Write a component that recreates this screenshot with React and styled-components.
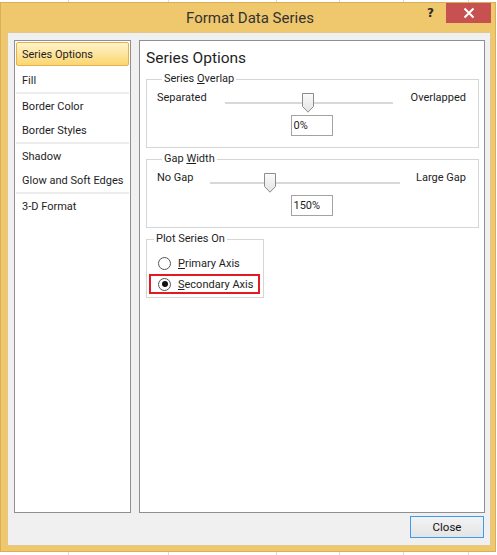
import styled, { createGlobalStyle } from 'styled-components'

const GlobalStyle = createGlobalStyle`
  html, body {
    margin: 0;
    padding: 0;
  }
  body {
    background-color: #ffffff;
    background-image:
      linear-gradient(#dadada, #dadada),
      linear-gradient(#dadada, #dadada),
      linear-gradient(#dadada, #dadada),
      linear-gradient(#dadada, #dadada),
      linear-gradient(#dadada, #dadada),
      linear-gradient(#dadada, #dadada);
    background-size: 1px 100%;
    background-repeat: no-repeat;
    background-position: 68px 0, 168px 0, 276px 0, 339px 0, 403px 0, 468px 0;
    height: 555px;
    font-family: Roboto, "Liberation Sans", sans-serif;
    font-size: 11px;
    color: #1e1e1e;
    white-space: nowrap;
  }
`

const menuItems = [
  [{ label: 'Series Options', selected: true }, { label: 'Fill' }],
  [{ label: 'Border Color' }, { label: 'Border Styles' }],
  [{ label: 'Shadow' }, { label: 'Glow and Soft Edges' }],
  [{ label: '3-D Format' }],
]

const Slider = ({ width, pos }) => (
  <Track $width={width}>
    <Thumb style={{ left: pos }} width='12' height='20' viewBox='0 0 12 20'>
      <defs>
        <linearGradient id='thumbFill' x1='0' y1='0' x2='0' y2='1'>
          <stop offset='0' stopColor='#fbfbfb' />
          <stop offset='1' stopColor='#e3e3e3' />
        </linearGradient>
      </defs>
      <path
        d='M0.5 0.5 H11.5 V13.5 L6 19.2 L0.5 13.5 Z'
        fill='url(#thumbFill)'
        stroke='#8c8c8c'
      />
    </Thumb>
  </Track>
)

const App = () => {
  return (
    <Page>
      <GlobalStyle />
      <Window>
        <TitleBar>
          <Title>Format Data Series</Title>
          <Help>?</Help>
          <CloseX>
            <svg width='12' height='12' viewBox='0 0 12 12'>
              <path d='M1.5 1.5 L10.5 10.5 M10.5 1.5 L1.5 10.5' stroke='#fff' strokeWidth='2' />
            </svg>
          </CloseX>
        </TitleBar>
        <Client>
          <Panels>
            <Menu>
              {menuItems.map((group, gi) => (
                <div key={gi}>
                  {gi > 0 && <Separator />}
                  {group.map((item) => (
                    <MenuItem key={item.label} $selected={item.selected}>
                      {item.label}
                    </MenuItem>
                  ))}
                </div>
              ))}
            </Menu>
            <Content>
              <Heading>Series Options</Heading>
              <Group>
                <Legend>
                  Series <u>O</u>verlap
                </Legend>
                <SliderRow>
                  <Label>Separated</Label>
                  <Slider width={168} pos={77} />
                  <Label>Overlapped</Label>
                </SliderRow>
                <ValueBox>0%</ValueBox>
              </Group>
              <Group>
                <Legend>
                  Gap <u>W</u>idth
                </Legend>
                <SliderRow>
                  <Label>No Gap</Label>
                  <Slider width={190} pos={54} />
                  <Label>Large Gap</Label>
                </SliderRow>
                <ValueBox>150%</ValueBox>
              </Group>
              <RadioGroup>
                <Legend>Plot Series On</Legend>
                <RadioRow>
                  <Radio />
                  <span>
                    <u>P</u>rimary Axis
                  </span>
                </RadioRow>
                <RadioRow $marked>
                  <Radio $checked />
                  <span>
                    <u>S</u>econdary Axis
                  </span>
                </RadioRow>
              </RadioGroup>
            </Content>
          </Panels>
          <Footer>
            <Button type='button'>Close</Button>
          </Footer>
        </Client>
      </Window>
    </Page>
  )
}

const Page = styled.div`
  padding-top: 2px;
`

const Window = styled.div`
  border: 1px solid #d9ae55;
  background: #efc76c;
  display: flex;
  flex-direction: column;
  padding: 0 4px 5px 6px;
  box-sizing: content-box;
  width: 484px;
  height: 543px;
`

const TitleBar = styled.div`
  height: 29px;
  position: relative;
  display: flex;
  align-items: center;
  justify-content: center;
`

const Title = styled.div`
  font-size: 15px;
  color: #333;
  margin-top: 1px;
  margin-left: 2px;
`

const Help = styled.div`
  position: absolute;
  right: 57px;
  top: 3px;
  font-family: "DejaVu Sans", sans-serif;
  font-weight: bold;
  font-size: 12px;
  color: #2a2a2a;
`

const CloseX = styled.div`
  position: absolute;
  right: 0;
  top: 0;
  width: 45px;
  height: 20px;
  background: #c75050;
  display: flex;
  align-items: center;
  justify-content: center;
`

const Client = styled.div`
  flex: 1;
  border: 1px solid #e2c88c;
  background: #f0f0f0;
  padding: 7px 5px 7px 6px;
  display: flex;
  flex-direction: column;
`

const Panels = styled.div`
  display: flex;
  gap: 8px;
  height: 473px;
`

const Panel = styled.div`
  background: #fff;
  border: 1px solid #8e8f92;
  box-sizing: border-box;
`

const Menu = styled(Panel)`
  width: 117px;
  padding: 1px 1px;
`

const MenuItem = styled.div`
  height: 24px;
  display: flex;
  align-items: center;
  box-sizing: border-box;
  padding-left: 6px;
  ${({ $selected }) =>
    $selected &&
    `
    margin-bottom: 2px;
    padding-left: 5px;
    border: 1px solid #e3b34e;
    border-radius: 2px;
    background: linear-gradient(#fff3c9, #fde49a 55%, #fbd56e);
  `}
`

const Separator = styled.div`
  height: 2px;
  background: #ececec;
`

const Content = styled(Panel)`
  width: 346px;
  padding: 0 5px 0 6px;
`

const Heading = styled.div`
  font-size: 15.5px;
  line-height: 20px;
  margin: 7px 0 4px;
`

const Group = styled.fieldset`
  margin: 0 0 4px;
  padding: 5px 12px 11px 10px;
  border: 1px solid #d5d5d5;
  display: flex;
  flex-direction: column;
  align-items: center;
`

const Legend = styled.legend`
  padding: 0 2px;
  margin-left: 5px;
  line-height: 14px;
`

const SliderRow = styled.div`
  align-self: stretch;
  display: flex;
  justify-content: space-between;
  align-items: flex-start;
  height: 20px;
`

const Label = styled.span`
  line-height: 14px;
`

const Track = styled.div`
  position: relative;
  width: ${({ $width }) => $width}px;
  height: 20px;
  margin-top: 2px;
  background: linear-gradient(#d8d8d8, #d8d8d8) no-repeat 0 9px / 100% 2px;
`

const Thumb = styled.svg`
  position: absolute;
  top: 0;
  display: block;
`

const ValueBox = styled.div`
  margin-top: 4px;
  width: 42px;
  height: 21px;
  box-sizing: border-box;
  border: 1px solid #a3a3a3;
  background: #fff;
  padding-left: 2px;
  display: flex;
  align-items: center;
`

const RadioGroup = styled.fieldset`
  margin: 3px 0 0;
  width: 118px;
  box-sizing: border-box;
  padding: 8px 2px 3px 2px;
  border: 1px solid #d5d5d5;
  display: flex;
  flex-direction: column;
`

const RadioRow = styled.label`
  display: flex;
  align-items: center;
  gap: 7px;
  height: ${({ $marked }) => ($marked ? '20px' : '19px')};
  width: 111px;
  box-sizing: border-box;
  padding-left: 7px;
  margin-top: ${({ $marked }) => ($marked ? '1px' : '0')};
  border: 2px solid ${({ $marked }) => ($marked ? '#e21a23' : 'transparent')};
`

const Radio = styled.span`
  flex: none;
  width: 13px;
  height: 13px;
  box-sizing: border-box;
  border-radius: 50%;
  border: 1px solid #555;
  background: #fff;
  display: flex;
  align-items: center;
  justify-content: center;
  &::after {
    content: '';
    width: 6px;
    height: 6px;
    border-radius: 50%;
    background: ${({ $checked }) => ($checked ? '#111' : 'transparent')};
  }
`

const Footer = styled.div`
  display: flex;
  justify-content: flex-end;
  margin-top: 3px;
  padding-right: 1px;
`

const Button = styled.button`
  width: 74px;
  height: 22px;
  border: 1px solid #3c9cf2;
  background: linear-gradient(#f3f3f3, #e4e4e4);
  font-family: inherit;
  font-size: 11.5px;
  color: #111;
  padding: 0;
`

export default App
